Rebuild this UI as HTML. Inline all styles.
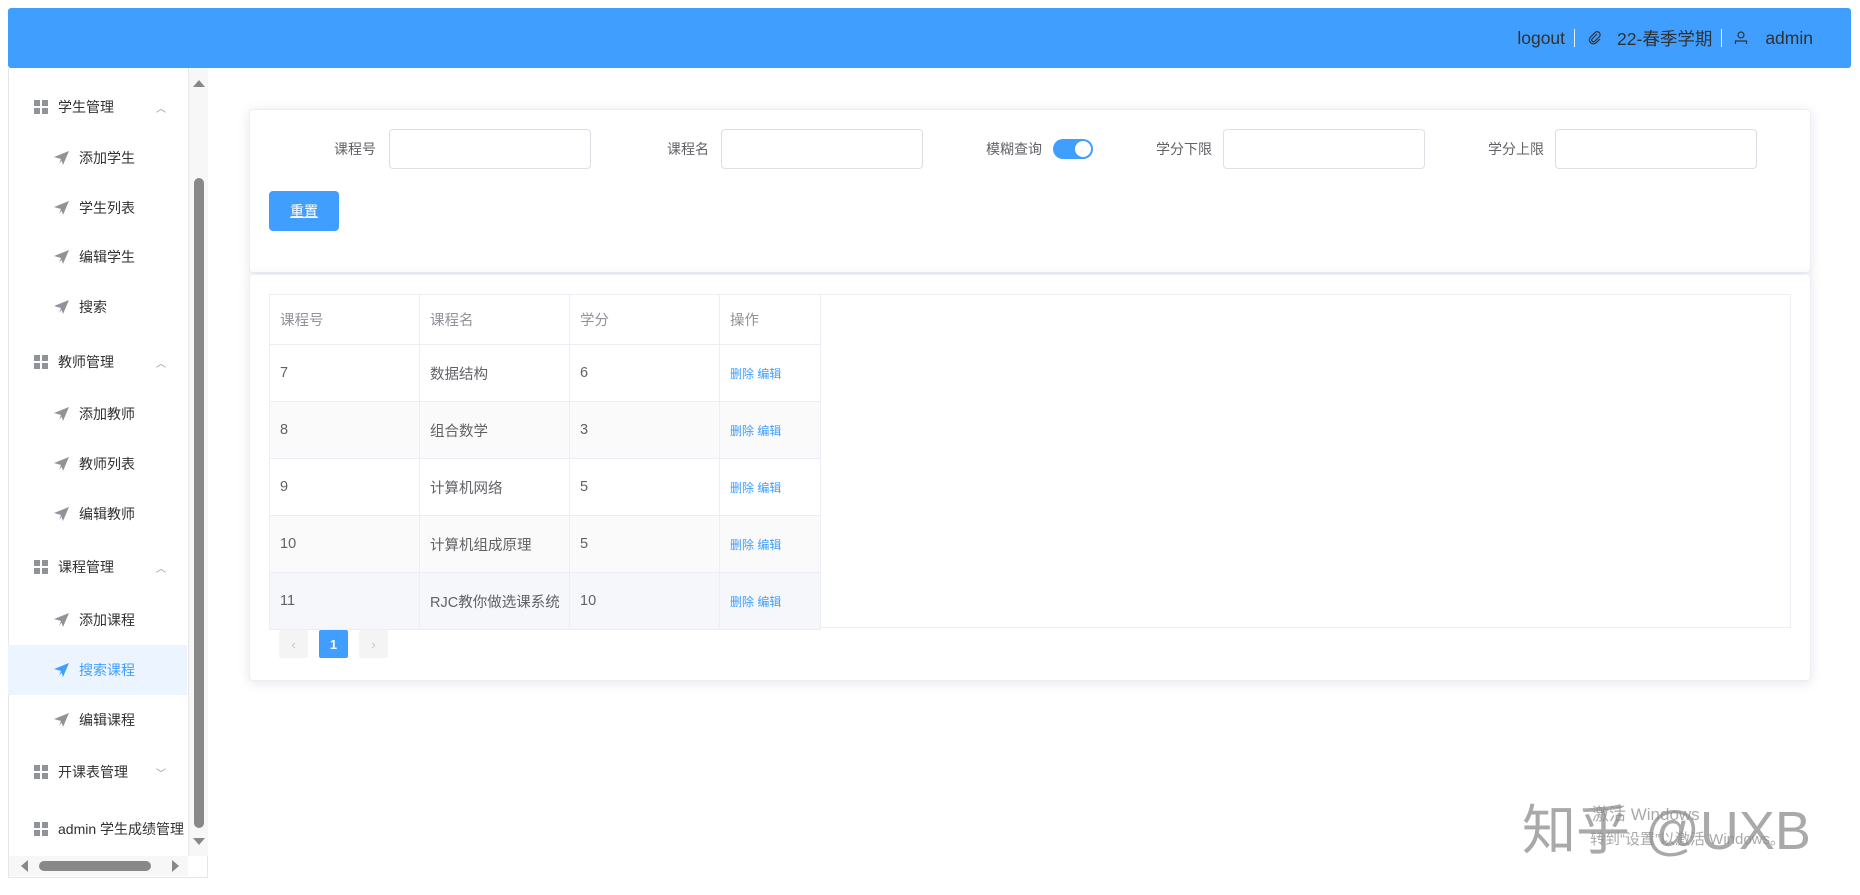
<!DOCTYPE html>
<html><head><meta charset="utf-8"><style>
*{box-sizing:border-box;margin:0;padding:0}
body{width:1860px;height:895px;background:#fff;font-family:"Liberation Sans","Noto Sans CJK SC",sans-serif;position:relative;overflow:hidden;color:#606266}
.abs{position:absolute}
.hdr{left:8px;top:8px;width:1843px;height:60px;background:#409eff;border-radius:3px}
.hdr .r{position:absolute;right:38px;top:0;height:60px;display:flex;align-items:center;font-size:17.5px;color:#303133}
.sep{display:inline-block;width:1px;height:18px;background:#e8f1fc;margin:0 9px}
.side{left:8px;top:68px;width:200px;height:810px;border:1px solid #e6e6e6;border-top:none}
.mi{position:absolute;left:0;width:179px;height:50px;display:flex;align-items:center;font-size:14px;color:#303133;white-space:nowrap}
.mi.g{padding-left:26px}
.mi.s{padding-left:46px}
.mi.act{background:#ecf5ff;color:#409eff}
.grid{width:14px;height:14px;margin-right:10px;display:grid;grid-template-columns:6px 6px;gap:2px;flex:none}
.grid i{background:#909399;display:block}
.plane{margin-right:10px}
.car{position:absolute;left:148px;font-size:10px;color:#909399}
.card{background:#fff;box-shadow:0 2px 12px rgba(0,0,0,.1);border:1px solid #ebeef5;border-radius:4px}
.lbl{font-size:14px;color:#606266;text-align:right}
.inp{border:1px solid #dcdfe6;border-radius:4px;height:40px;background:#fff}
table{border-collapse:collapse;font-size:14.5px}
td{border:1px solid #ebeef5;padding-left:10px;color:#606266;height:57px}
th{border:1px solid #ebeef5;padding-left:10px;color:#909399;font-weight:normal;text-align:left;height:50px}
.lk{color:#409eff;font-size:12px}
.pg{width:29px;height:28px;background:#f4f4f5;border-radius:2px;display:flex;align-items:center;justify-content:center;font-size:13px;color:#c0c4cc}
</style></head><body>
<div class="abs hdr"><div class="r">logout<span class="sep"></span>
<svg width="16" height="16" viewBox="0 0 16 16" style="margin:0 14px 0 3px"><path d="M10 4 L5 9 a1.8 1.8 0 0 0 2.5 2.5 L12.5 6.5 a3 3 0 0 0-4.2-4.2 L3.5 7 a4 4 0 0 0 5.7 5.7 L13 9" fill="none" stroke="#303133" stroke-width="1.2"/></svg>
22-春季学期<span class="sep"></span>
<svg width="16" height="16" viewBox="0 0 16 16" style="margin:0 16px 0 2px"><circle cx="8" cy="5" r="3" fill="none" stroke="#303133" stroke-width="1.2"/><path d="M2.5 14 v-3 h11 v3" fill="none" stroke="#303133" stroke-width="1.2"/></svg>
admin</div></div>

<div class="abs side">
<div class="abs" style="left:179px;top:0;width:20px;height:788px;background:#f7f7f7;border-left:1px solid #e6e6e6"></div>
<div class="abs" style="left:184px;top:12px;width:0;height:0;border-left:6px solid transparent;border-right:6px solid transparent;border-bottom:7px solid #888"></div>
<div class="abs" style="left:185px;top:110px;width:10px;height:650px;background:#888;border-radius:5px"></div>
<div class="abs" style="left:184px;top:770px;width:0;height:0;border-left:6px solid transparent;border-right:6px solid transparent;border-top:7px solid #888"></div>
<div class="abs" style="left:0;top:788px;width:179px;height:20px;background:#f7f7f7"></div>
<div class="abs" style="left:12px;top:792px;width:0;height:0;border-top:6px solid transparent;border-bottom:6px solid transparent;border-right:7px solid #888"></div>
<div class="abs" style="left:30px;top:793px;width:112px;height:10px;background:#888;border-radius:5px"></div>
<div class="abs" style="left:163px;top:792px;width:0;height:0;border-top:6px solid transparent;border-bottom:6px solid transparent;border-left:7px solid #888"></div>
</div>
<div class="abs" style="left:8px;top:68px;width:180px;height:788px;overflow:hidden">
<div class="mi g" style="top:14px"><span class="grid"><i></i><i></i><i></i><i></i></span>学生管理<span class="car">︿</span></div>
<div class="mi s" style="top:65px"><svg class="plane" width="15" height="14" viewBox="0 0 15 14"><path d="M0 6 L15 0 L9 14 L7 8 Z M7 8 L15 0 L5 13 Z" fill="#909399"/></svg>添加学生</div>
<div class="mi s" style="top:115px"><svg class="plane" width="15" height="14" viewBox="0 0 15 14"><path d="M0 6 L15 0 L9 14 L7 8 Z M7 8 L15 0 L5 13 Z" fill="#909399"/></svg>学生列表</div>
<div class="mi s" style="top:164px"><svg class="plane" width="15" height="14" viewBox="0 0 15 14"><path d="M0 6 L15 0 L9 14 L7 8 Z M7 8 L15 0 L5 13 Z" fill="#909399"/></svg>编辑学生</div>
<div class="mi s" style="top:214px"><svg class="plane" width="15" height="14" viewBox="0 0 15 14"><path d="M0 6 L15 0 L9 14 L7 8 Z M7 8 L15 0 L5 13 Z" fill="#909399"/></svg>搜索</div>
<div class="mi g" style="top:269px"><span class="grid"><i></i><i></i><i></i><i></i></span>教师管理<span class="car">︿</span></div>
<div class="mi s" style="top:321px"><svg class="plane" width="15" height="14" viewBox="0 0 15 14"><path d="M0 6 L15 0 L9 14 L7 8 Z M7 8 L15 0 L5 13 Z" fill="#909399"/></svg>添加教师</div>
<div class="mi s" style="top:371px"><svg class="plane" width="15" height="14" viewBox="0 0 15 14"><path d="M0 6 L15 0 L9 14 L7 8 Z M7 8 L15 0 L5 13 Z" fill="#909399"/></svg>教师列表</div>
<div class="mi s" style="top:421px"><svg class="plane" width="15" height="14" viewBox="0 0 15 14"><path d="M0 6 L15 0 L9 14 L7 8 Z M7 8 L15 0 L5 13 Z" fill="#909399"/></svg>编辑教师</div>
<div class="mi g" style="top:474px"><span class="grid"><i></i><i></i><i></i><i></i></span>课程管理<span class="car">︿</span></div>
<div class="mi s" style="top:527px"><svg class="plane" width="15" height="14" viewBox="0 0 15 14"><path d="M0 6 L15 0 L9 14 L7 8 Z M7 8 L15 0 L5 13 Z" fill="#909399"/></svg>添加课程</div>
<div class="mi s act" style="top:577px"><svg class="plane" width="15" height="14" viewBox="0 0 15 14"><path d="M0 6 L15 0 L9 14 L7 8 Z M7 8 L15 0 L5 13 Z" fill="#409eff"/></svg>搜索课程</div>
<div class="mi s" style="top:627px"><svg class="plane" width="15" height="14" viewBox="0 0 15 14"><path d="M0 6 L15 0 L9 14 L7 8 Z M7 8 L15 0 L5 13 Z" fill="#909399"/></svg>编辑课程</div>
<div class="mi g" style="top:679px"><span class="grid"><i></i><i></i><i></i><i></i></span>开课表管理<span class="car">﹀</span></div>
<div class="mi g" style="top:736px;width:200px"><span class="grid"><i></i><i></i><i></i><i></i></span>admin 学生成绩管理</div>
</div>

<div class="abs card" style="left:249px;top:109px;width:1562px;height:164px"></div>
<div class="abs lbl" style="left:320px;top:139px;width:56px">课程号</div>
<div class="abs inp" style="left:389px;top:129px;width:202px"></div>
<div class="abs lbl" style="left:650px;top:139px;width:59px">课程名</div>
<div class="abs inp" style="left:721px;top:129px;width:202px"></div>
<div class="abs lbl" style="left:980px;top:139px;width:62px">模糊查询</div>
<div class="abs" style="left:1053px;top:139px;width:40px;height:20px;border-radius:10px;background:#409eff"><div class="abs" style="right:2px;top:2px;width:16px;height:16px;border-radius:50%;background:#fff"></div></div>
<div class="abs lbl" style="left:1150px;top:139px;width:62px">学分下限</div>
<div class="abs inp" style="left:1223px;top:129px;width:202px"></div>
<div class="abs lbl" style="left:1482px;top:139px;width:62px">学分上限</div>
<div class="abs inp" style="left:1555px;top:129px;width:202px"></div>
<div class="abs" style="left:269px;top:191px;width:70px;height:40px;background:#409eff;border-radius:4px;color:#fff;font-size:14px;text-align:center;line-height:40px;text-decoration:underline">重置</div>

<div class="abs card" style="left:249px;top:274px;width:1562px;height:407px"></div>
<div class="abs" style="left:269px;top:294px;width:1522px;height:334px;border:1px solid #ebeef5"></div>
<table class="abs" style="left:269px;top:294px;width:552px">
<tr><th style="width:150px">课程号</th><th style="width:150px">课程名</th><th style="width:150px">学分</th><th>操作</th></tr>
<tr><td>7</td><td>数据结构</td><td>6</td><td><span class="lk">删除 编辑</span></td></tr>
<tr style="background:#fafafa"><td>8</td><td>组合数学</td><td>3</td><td><span class="lk">删除 编辑</span></td></tr>
<tr><td>9</td><td>计算机网络</td><td>5</td><td><span class="lk">删除 编辑</span></td></tr>
<tr style="background:#fafafa"><td>10</td><td>计算机组成原理</td><td>5</td><td><span class="lk">删除 编辑</span></td></tr>
<tr style="background:#f5f7fa"><td>11</td><td>RJC教你做选课系统</td><td>10</td><td><span class="lk">删除 编辑</span></td></tr>
</table>
<div class="abs pg" style="left:279px;top:630px">‹</div>
<div class="abs pg" style="left:319px;top:630px;background:#409eff;color:#fff;font-weight:bold">1</div>
<div class="abs pg" style="left:359px;top:630px">›</div>

<div class="abs" style="left:1592px;top:800px;font-size:17px;color:#aaa">激活 Windows</div>
<div class="abs" style="left:1590px;top:828px;font-size:15px;color:#aaa">转到“设置”以激活 Windows。</div>
<div class="abs" style="left:1522px;top:786px;font-size:54px;color:rgba(140,140,140,.75);white-space:nowrap">知乎 @UXB</div>
</body></html>
